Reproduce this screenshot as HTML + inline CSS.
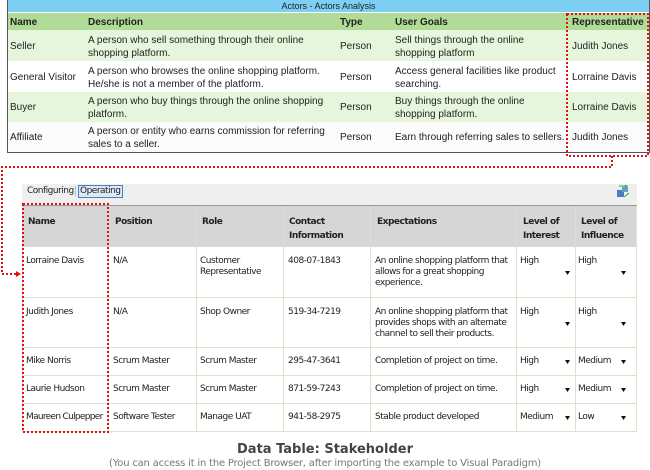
<!DOCTYPE html><html><head><style>
body{margin:0;width:650px;height:470px;background:#fff;font-family:"Liberation Sans",Arial,sans-serif;position:relative;overflow:hidden}
.a{position:absolute}
.t{font-size:10px;color:#222;line-height:13px}
.s{font-size:9px;color:#222;line-height:11px;font-family:"DejaVu Sans",sans-serif;letter-spacing:-0.5px}
</style></head><body>
<div class="a" style="left:7px;top:0;width:643px;height:153px;border:1px solid #555;border-top:none;box-sizing:border-box"></div>
<div class="a" style="left:8px;top:0;width:641px;height:12px;background:#7dcff3;font-size:9px;text-align:center;line-height:12px;color:#222">Actors - Actors Analysis</div>
<div class="a" style="left:8px;top:13px;width:641px;height:17px;background:#b1dc98"></div>
<div class="a" style="left:8px;top:30px;width:641px;height:31px;background:#e6f6dc"></div>
<div class="a" style="left:8px;top:92px;width:641px;height:30px;background:#e6f6dc"></div>
<div class="a" style="left:8px;top:122px;width:641px;height:30px;background:#fbfbfb"></div>
<div class="a t" style="left:10px;top:16px;font-weight:bold">Name</div>
<div class="a t" style="left:88px;top:16px;font-weight:bold">Description</div>
<div class="a t" style="left:340px;top:16px;font-weight:bold">Type</div>
<div class="a t" style="left:395px;top:16px;font-weight:bold">User Goals</div>
<div class="a t" style="left:572px;top:16px;font-weight:bold">Representative</div>

<div class="a t" style="left:10px;top:40px">Seller</div>
<div class="a t" style="left:88px;top:34px">A person who sell something through their online<br>shopping platform.</div>
<div class="a t" style="left:340px;top:40px">Person</div>
<div class="a t" style="left:395px;top:34px">Sell things through the online<br>shopping platform</div>
<div class="a t" style="left:572px;top:40px">Judith Jones</div>

<div class="a t" style="left:10px;top:71px">General Visitor</div>
<div class="a t" style="left:88px;top:65px">A person who browses the online shopping platform.<br>He/she is not a member of the platform.</div>
<div class="a t" style="left:340px;top:71px">Person</div>
<div class="a t" style="left:395px;top:65px">Access general facilities like product<br>searching.</div>
<div class="a t" style="left:572px;top:71px">Lorraine Davis</div>

<div class="a t" style="left:10px;top:101px">Buyer</div>
<div class="a t" style="left:88px;top:95px">A person who buy things through the online shopping<br>platform.</div>
<div class="a t" style="left:340px;top:101px">Person</div>
<div class="a t" style="left:395px;top:95px">Buy things through the online<br>shopping platform.</div>
<div class="a t" style="left:572px;top:101px">Lorraine Davis</div>

<div class="a t" style="left:10px;top:131px">Affiliate</div>
<div class="a t" style="left:88px;top:125px">A person or entity who earns commission for referring<br>sales to a seller.</div>
<div class="a t" style="left:340px;top:131px">Person</div>
<div class="a t" style="left:395px;top:131px">Earn through referring sales to sellers.</div>
<div class="a t" style="left:572px;top:131px">Judith Jones</div>

<div class="a" style="left:22px;top:184px;width:615px;height:21px;background:#efefef;border-bottom:1px solid #999"></div>
<div class="a s" style="left:27px;top:186px">Configuring</div>
<div class="a" style="left:75px;top:186px;width:1px;height:10px;background:#bbb"></div>
<div class="a s" style="left:78px;top:185px;border:1px solid #4a7fc0;background:#dde9f7;padding:0 1px">Operating</div>
<svg class="a" style="left:616px;top:185px" width="14" height="14"><rect x="1" y="5" width="7" height="7" fill="#4a7ec0"/><rect x="6" y="2" width="6" height="5" fill="#6a9ad0"/><path d="M3 1 L10 1 M9 0 L11 1 L9 2" stroke="#3a3" fill="none"/><path d="M8 12 L13 8" stroke="#3a3"/></svg>

<svg class="a" style="left:0;top:0" width="650" height="470">
<rect x="22" y="206" width="615" height="41" fill="#d6d6d6"/>
<g stroke="#e3dfcf" stroke-width="1">
<line x1="22.5" y1="206" x2="22.5" y2="432"/><line x1="108.5" y1="206" x2="108.5" y2="432"/><line x1="196.5" y1="206" x2="196.5" y2="432"/><line x1="283.5" y1="206" x2="283.5" y2="432"/><line x1="370.5" y1="206" x2="370.5" y2="432"/><line x1="516.5" y1="206" x2="516.5" y2="432"/><line x1="575.5" y1="206" x2="575.5" y2="432"/><line x1="636.5" y1="206" x2="636.5" y2="432"/>
<line x1="22" y1="297.5" x2="637" y2="297.5"/><line x1="22" y1="347.5" x2="637" y2="347.5"/><line x1="22" y1="375.5" x2="637" y2="375.5"/><line x1="22" y1="403.5" x2="637" y2="403.5"/><line x1="22" y1="431.5" x2="637" y2="431.5"/>
</g>
<g fill="none" stroke="#e01010" stroke-width="2" stroke-dasharray="2,2">
<rect x="567" y="14" width="81" height="142"/>
<rect x="23" y="204" width="85" height="228"/>
<path d="M612 156 V167 H2 V274 H16"/>
</g>
<path d="M16 271 L21 274 L16 277 Z" fill="#e01010"/>
<g fill="#111">
<path d="M621 271h5l-2.5 4z"/><path d="M565 271h5l-2.5 4z"/>
<path d="M621 322h5l-2.5 4z"/><path d="M565 322h5l-2.5 4z"/>
<path d="M621 360h5l-2.5 4z"/><path d="M565 360h5l-2.5 4z"/>
<path d="M621 388h5l-2.5 4z"/><path d="M565 388h5l-2.5 4z"/>
<path d="M621 416h5l-2.5 4z"/><path d="M565 416h5l-2.5 4z"/>
</g>
</svg>
<div class="a s" style="left:28px;top:215px;font-weight:bold;line-height:14px">Name</div>
<div class="a s" style="left:115px;top:215px;font-weight:bold;line-height:14px">Position</div>
<div class="a s" style="left:202px;top:215px;font-weight:bold;line-height:14px">Role</div>
<div class="a s" style="left:289px;top:215px;font-weight:bold;line-height:14px">Contact<br>Information</div>
<div class="a s" style="left:377px;top:215px;font-weight:bold;line-height:14px">Expectations</div>
<div class="a s" style="left:523px;top:215px;font-weight:bold;line-height:14px">Level of<br>Interest</div>
<div class="a s" style="left:581px;top:215px;font-weight:bold;line-height:14px">Level of<br>Influence</div>

<div class="a s" style="left:26px;top:256px">Lorraine Davis</div><div class="a s" style="left:113px;top:256px">N/A</div><div class="a s" style="left:200px;top:256px">Customer<br>Representative</div><div class="a s" style="left:288px;top:256px">408-07-1843</div><div class="a s" style="left:375px;top:256px">An online shopping platform that<br>allows for a great shopping<br>experience.</div><div class="a s" style="left:520px;top:256px">High</div><div class="a s" style="left:578px;top:256px">High</div>

<div class="a s" style="left:26px;top:307px">Judith Jones</div><div class="a s" style="left:113px;top:307px">N/A</div><div class="a s" style="left:200px;top:307px">Shop Owner</div><div class="a s" style="left:288px;top:307px">519-34-7219</div><div class="a s" style="left:375px;top:307px">An online shopping platform that<br>provides shops with an alternate<br>channel to sell their products.</div><div class="a s" style="left:520px;top:307px">High</div><div class="a s" style="left:578px;top:307px">High</div>

<div class="a s" style="left:26px;top:356px">Mike Norris</div><div class="a s" style="left:113px;top:356px">Scrum Master</div><div class="a s" style="left:200px;top:356px">Scrum Master</div><div class="a s" style="left:288px;top:356px">295-47-3641</div><div class="a s" style="left:375px;top:356px">Completion of project on time.</div><div class="a s" style="left:520px;top:356px">High</div><div class="a s" style="left:578px;top:356px">Medium</div>

<div class="a s" style="left:26px;top:384px">Laurie Hudson</div><div class="a s" style="left:113px;top:384px">Scrum Master</div><div class="a s" style="left:200px;top:384px">Scrum Master</div><div class="a s" style="left:288px;top:384px">871-59-7243</div><div class="a s" style="left:375px;top:384px">Completion of project on time.</div><div class="a s" style="left:520px;top:384px">High</div><div class="a s" style="left:578px;top:384px">Medium</div>

<div class="a s" style="left:26px;top:412px;letter-spacing:-0.7px">Maureen Culpepper</div><div class="a s" style="left:113px;top:412px">Software Tester</div><div class="a s" style="left:200px;top:412px">Manage UAT</div><div class="a s" style="left:288px;top:412px">941-58-2975</div><div class="a s" style="left:375px;top:412px">Stable product developed</div><div class="a s" style="left:520px;top:412px">Medium</div><div class="a s" style="left:578px;top:412px">Low</div>

<div class="a" style="left:0;top:442px;width:650px;text-align:center;font-size:13px;font-weight:bold;color:#444;font-family:'DejaVu Sans',sans-serif">Data Table: Stakeholder</div>
<div class="a" style="left:0;top:458px;width:650px;text-align:center;font-size:10px;color:#777;font-family:'DejaVu Sans',sans-serif;letter-spacing:-0.2px">(You can access it in the Project Browser, after importing the example to Visual Paradigm)</div>
</body></html>
